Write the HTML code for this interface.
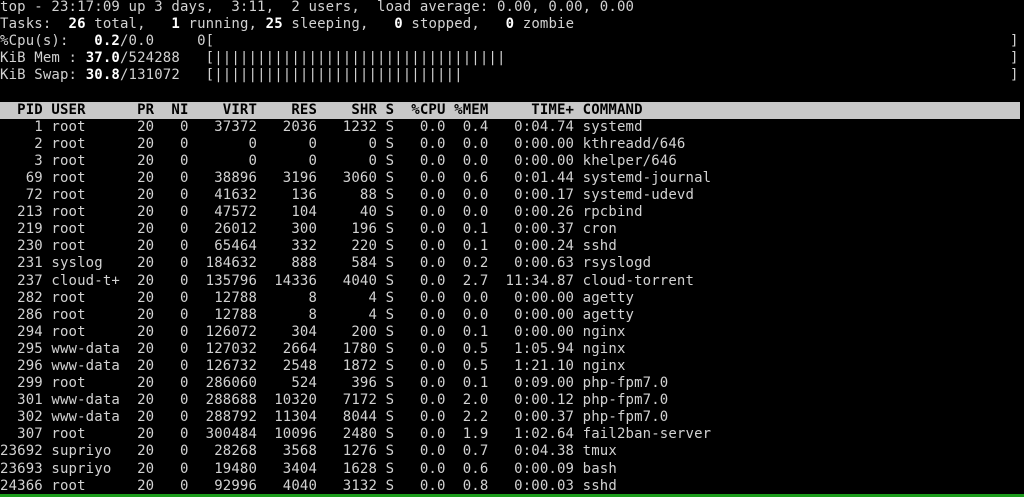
<!DOCTYPE html>
<html><head><meta charset="utf-8"><style>
html,body{margin:0;padding:0;background:#000;width:1024px;height:497px;overflow:hidden}
pre{margin:0;font-family:"DejaVu Sans Mono","Liberation Mono",monospace;font-size:14px;letter-spacing:0.14px;line-height:17.1px;color:#d2d2d2;position:relative;top:-1px}
b{color:#fff;font-weight:bold}
.l{display:block;height:17.1px;white-space:pre;position:relative}
.h{background:#c8c8c8;color:#000;font-weight:bold;width:1020px}
.r{position:absolute;left:1010px;top:0}
.g{position:absolute;left:0;top:494px;width:1024px;height:3px;background:#1c9c1c}
</style></head><body>
<pre><span class="l">top - 23:17:09 up 3 days,  3:11,  2 users,  load average: 0.00, 0.00, 0.00</span><span class="l">Tasks: <b> 26 </b>total,  <b> 1 </b>running, <b>25 </b>sleeping,  <b> 0 </b>stopped,  <b> 0 </b>zombie</span><span class="l">%Cpu(s): <b>  0.2</b>/0.0     0[<span class="r">]</span></span><span class="l">KiB Mem : <b>37.0</b>/524288   [||||||||||||||||||||||||||||||||||<span class="r">]</span></span><span class="l">KiB Swap: <b>30.8</b>/131072   [|||||||||||||||||||||||||||||<span class="r">]</span></span><span class="l"> </span><span class="l h">  PID USER      PR  NI    VIRT    RES    SHR S  %CPU %MEM     TIME+ COMMAND</span><span class="l">    1 root      20   0   37372   2036   1232 S   0.0  0.4   0:04.74 systemd</span><span class="l">    2 root      20   0       0      0      0 S   0.0  0.0   0:00.00 kthreadd/646</span><span class="l">    3 root      20   0       0      0      0 S   0.0  0.0   0:00.00 khelper/646</span><span class="l">   69 root      20   0   38896   3196   3060 S   0.0  0.6   0:01.44 systemd-journal</span><span class="l">   72 root      20   0   41632    136     88 S   0.0  0.0   0:00.17 systemd-udevd</span><span class="l">  213 root      20   0   47572    104     40 S   0.0  0.0   0:00.26 rpcbind</span><span class="l">  219 root      20   0   26012    300    196 S   0.0  0.1   0:00.37 cron</span><span class="l">  230 root      20   0   65464    332    220 S   0.0  0.1   0:00.24 sshd</span><span class="l">  231 syslog    20   0  184632    888    584 S   0.0  0.2   0:00.63 rsyslogd</span><span class="l">  237 cloud-t+  20   0  135796  14336   4040 S   0.0  2.7  11:34.87 cloud-torrent</span><span class="l">  282 root      20   0   12788      8      4 S   0.0  0.0   0:00.00 agetty</span><span class="l">  286 root      20   0   12788      8      4 S   0.0  0.0   0:00.00 agetty</span><span class="l">  294 root      20   0  126072    304    200 S   0.0  0.1   0:00.00 nginx</span><span class="l">  295 www-data  20   0  127032   2664   1780 S   0.0  0.5   1:05.94 nginx</span><span class="l">  296 www-data  20   0  126732   2548   1872 S   0.0  0.5   1:21.10 nginx</span><span class="l">  299 root      20   0  286060    524    396 S   0.0  0.1   0:09.00 php-fpm7.0</span><span class="l">  301 www-data  20   0  288688  10320   7172 S   0.0  2.0   0:00.12 php-fpm7.0</span><span class="l">  302 www-data  20   0  288792  11304   8044 S   0.0  2.2   0:00.37 php-fpm7.0</span><span class="l">  307 root      20   0  300484  10096   2480 S   0.0  1.9   1:02.64 fail2ban-server</span><span class="l">23692 supriyo   20   0   28268   3568   1276 S   0.0  0.7   0:04.38 tmux</span><span class="l">23693 supriyo   20   0   19480   3404   1628 S   0.0  0.6   0:00.09 bash</span><span class="l">24366 root      20   0   92996   4040   3132 S   0.0  0.8   0:00.03 sshd</span></pre>
<div class="g"></div>
</body></html>
